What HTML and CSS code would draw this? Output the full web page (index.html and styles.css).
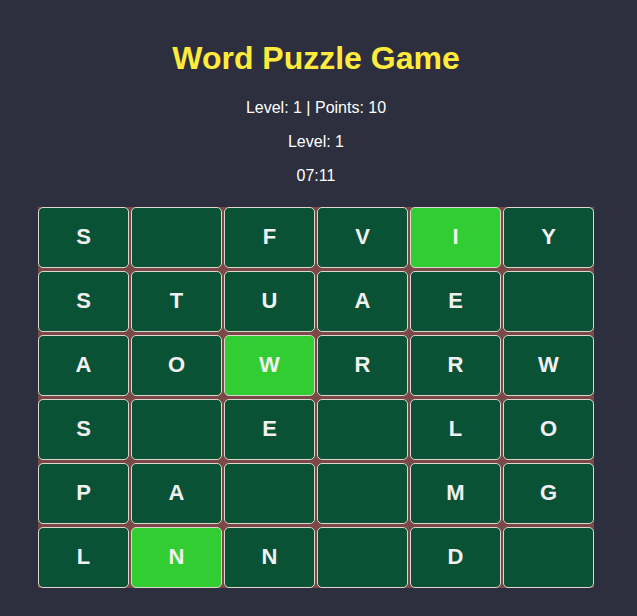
FILE: index.html
```html
<!DOCTYPE html>
<html>
<head>
<meta charset="utf-8">
<link rel="stylesheet" href="styles.css">
</head>
<body>
<div class="app">
  <h1 class="title">Word Puzzle Game</h1>
  <p class="info">Level: 1 | Points: 10</p>
  <p class="info">Level: 1</p>
  <p class="info">07:11</p>
  <div class="grid">
    <div class="cell">S</div><div class="cell"></div><div class="cell">F</div><div class="cell">V</div><div class="cell hit">I</div><div class="cell">Y</div>
    <div class="cell">S</div><div class="cell">T</div><div class="cell">U</div><div class="cell">A</div><div class="cell">E</div><div class="cell"></div>
    <div class="cell">A</div><div class="cell">O</div><div class="cell hit">W</div><div class="cell">R</div><div class="cell">R</div><div class="cell">W</div>
    <div class="cell">S</div><div class="cell"></div><div class="cell">E</div><div class="cell"></div><div class="cell">L</div><div class="cell">O</div>
    <div class="cell">P</div><div class="cell">A</div><div class="cell"></div><div class="cell"></div><div class="cell">M</div><div class="cell">G</div>
    <div class="cell">L</div><div class="cell hit">N</div><div class="cell">N</div><div class="cell"></div><div class="cell">D</div><div class="cell"></div>
  </div>
</div>
</body>
</html>
```

FILE: styles.css
```css
html, body {
  margin: 0;
  padding: 0;
  background: #2d2f3e;
}
body {
  font-family: "Liberation Sans", Arial, sans-serif;
  color: #ffffff;
}
.app {
  width: 632px;
  padding-top: 19px;
  display: flex;
  flex-direction: column;
  align-items: center;
}
.title {
  font-size: 32px;
  font-weight: bold;
  color: #ffeb3b;
  margin: 21.44px 0;
}
.info {
  font-size: 16px;
  margin: 0 0 16px 0;
}
.grid {
  margin-top: 6px;
  width: 556px;
  display: grid;
  grid-template-columns: repeat(6, 1fr);
  grid-auto-rows: 61px;
  gap: 3px 2px;
  background: #7b4848;
}
.cell {
  background: #0a5236;
  border: 1px solid #ddd6cc;
  border-radius: 5px;
  display: flex;
  align-items: center;
  justify-content: center;
  font-size: 22px;
  font-weight: bold;
  color: #f0f0f0;
}
.cell.hit {
  background: #32cd32;
}
```
